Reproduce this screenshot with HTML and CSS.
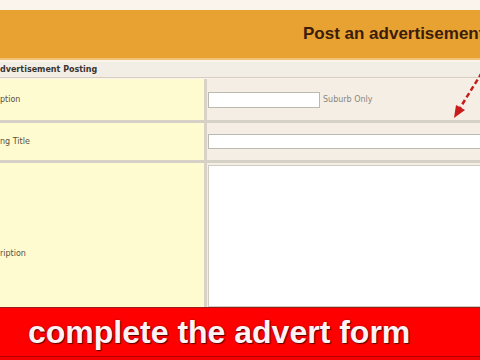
FILE: index.html
```html
<!DOCTYPE html>
<html lang="en">
<head>
    <meta charset="UTF-8">
    <title>Post an advertisement</title>
    <link rel="stylesheet" href="styles.css">
</head>
<body>
    <div class="topbar"></div>
    <div class="header">
        <h1>Post an advertisement</h1>
    </div>

    <div class="form">
        <div class="section">dvertisement Posting</div>

        <div class="row row-location">
            <div class="label">ption</div>
            <div class="field">
                <input type="text" class="short">
                <span class="hint">Suburb Only</span>
            </div>
        </div>

        <div class="row row-title">
            <div class="label">ng Title</div>
            <div class="field">
                <input type="text" class="wide">
            </div>
        </div>

        <div class="row row-desc">
            <div class="label">ription</div>
            <div class="field">
                <textarea></textarea>
            </div>
        </div>
    </div>

    <div class="banner">complete the advert form</div>
    <div class="banner-foot"></div>

    <svg class="arrow" width="40" height="60" viewBox="0 0 40 60">
        <line x1="40" y1="2" x2="14" y2="44" stroke="#c81c1c" stroke-width="2.5" stroke-dasharray="5 3"/>
        <path d="M8 54 L10 41 L19 46 Z" fill="#c81c1c"/>
    </svg>
</body>
</html>
```

FILE: styles.css
```css
body {
    margin: 0;
    width: 480px;
    height: 360px;
    overflow: hidden;
    position: relative;
    background: #faf3ea;
    font-family: 'DejaVu Sans', sans-serif;
    white-space: nowrap;
}

.topbar {
    height: 10px;
    background: #fbf4ec;
}

.header {
    height: 48px;
    background: #e8a232;
    border-bottom: 2px solid #f1c277;
    display: flex;
    align-items: center;
    overflow: hidden;
}

.header h1 {
    margin: 0 0 0 303px;
    font-family: 'Liberation Sans', Arial, sans-serif;
    font-size: 17px;
    font-weight: bold;
    color: #3b1d0a;
}

.section {
    margin-top: 2px;
    height: 15px;
    line-height: 15px;
    background: #f3eee5;
    border-bottom: 1px solid #d5cdbf;
    margin-bottom: 1px;
    font-size: 8px;
    font-weight: bold;
    color: #3a3530;
}

.row {
    display: flex;
    border-bottom: 3px solid #d6d1c6;
}

.label {
    width: 207px;
    flex-shrink: 0;
    box-sizing: border-box;
    background: #fffbd0;
    border-right: 3px solid #d8d3c6;
    font-size: 8px;
    color: #5a5040;
    display: flex;
    align-items: center;
}

.field {
    flex: 1;
    min-width: 0;
    overflow: hidden;
    background: #f4eee4;
    padding-left: 1px;
    display: flex;
    align-items: center;
}

.row-location {
    height: 41px;
}

.row-title {
    height: 37px;
}

.row-title .field {
    align-items: flex-start;
    padding-top: 11px;
}

.row-desc {
    height: 144px;
    border-bottom: none;
}

.row-desc .label {
    align-items: flex-start;
    padding-top: 86px;
}

.row-desc .field {
    align-items: stretch;
    padding-top: 2px;
}

input,
textarea {
    margin: 0;
    padding: 0;
    box-sizing: border-box;
    background: #fff;
    border: 1px solid #bcb9b0;
    flex-shrink: 0;
}

input.short {
    width: 112px;
    height: 16px;
}

input.wide {
    width: 320px;
    height: 15px;
}

textarea {
    width: 320px;
    height: 100%;
    resize: none;
    border-color: #d0ccc2;
}

.hint {
    margin-left: 3px;
    font-size: 8px;
    color: #8a877e;
}

.banner {
    height: 48px;
    line-height: 48px;
    background: #fe0000;
    border-top: 1px solid #9b1a1a;
    border-bottom: 1px solid #b00000;
    padding-left: 28px;
    font-family: 'Liberation Sans', Arial, sans-serif;
    font-size: 32px;
    font-weight: bold;
    color: #fff2f4;
    text-shadow: 1px 1px 1px #5a0000, 0 0 2px #8a0000;
}

.banner-foot {
    height: 10px;
    background: #f20000;
}

.arrow {
    position: absolute;
    left: 446px;
    top: 64px;
}
```
